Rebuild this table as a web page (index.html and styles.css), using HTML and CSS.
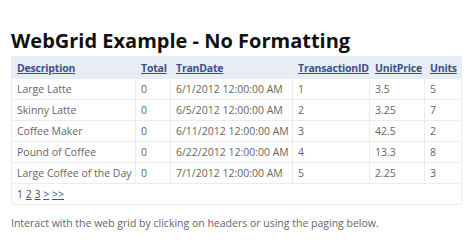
FILE: index.html
```html
<!DOCTYPE html>
<html>
<head>
<meta charset="utf-8">
<link rel="stylesheet" href="styles.css">
</head>
<body>
<div class="page">
  <h1 class="title">WebGrid Example - No Formatting</h1>
  <table class="grid">
    <colgroup>
      <col class="c-desc"><col class="c-total"><col class="c-date"><col class="c-id"><col class="c-price"><col class="c-units">
    </colgroup>
    <thead>
      <tr>
        <th><a href="#">Description</a></th>
        <th><a href="#">Total</a></th>
        <th><a href="#">TranDate</a></th>
        <th><a href="#">TransactionID</a></th>
        <th><a href="#">UnitPrice</a></th>
        <th><a href="#">Units</a></th>
      </tr>
    </thead>
    <tbody>
      <tr><td>Large Latte</td><td>0</td><td>6/1/2012 12:00:00 AM</td><td>1</td><td>3.5</td><td>5</td></tr>
      <tr><td>Skinny Latte</td><td>0</td><td>6/5/2012 12:00:00 AM</td><td>2</td><td>3.25</td><td>7</td></tr>
      <tr><td>Coffee Maker</td><td>0</td><td>6/11/2012 12:00:00 AM</td><td>3</td><td>42.5</td><td>2</td></tr>
      <tr><td>Pound of Coffee</td><td>0</td><td>6/22/2012 12:00:00 AM</td><td>4</td><td>13.3</td><td>8</td></tr>
      <tr><td>Large Coffee of the Day</td><td>0</td><td>7/1/2012 12:00:00 AM</td><td>5</td><td>2.25</td><td>3</td></tr>
    </tbody>
    <tfoot>
      <tr><td colspan="6" class="pager">1 <a href="#">2</a> <a href="#">3</a> <a href="#">&gt;</a> <a href="#">&gt;&gt;</a></td></tr>
    </tfoot>
  </table>
  <p class="note">Interact with the web grid by clicking on headers or using the paging below.</p>
</div>
</body>
</html>
```
FILE: styles.css
```css
html, body {
  margin: 0;
  padding: 0;
  background: #ffffff;
}
.page {
  padding: 29px 0 0 11px;
  font-family: "Open Sans", "DejaVu Sans", sans-serif;
  color: #666666;
}
.title {
  margin: 0 0 3px 0;
  font-size: 20px;
  line-height: 24px;
  font-weight: 700;
  color: #111111;
}
.grid {
  border-collapse: collapse;
  table-layout: fixed;
  width: 450px;
  font-size: 10.5px;
}
.grid th, .grid td {
  border: 1px solid #ececec;
  height: 20px;
  padding: 0 4px 0 5px;
  text-align: left;
  white-space: nowrap;
  overflow: hidden;
}
.grid thead th {
  background: #e8edf4;
  border-color: #e8edf4;
  height: 21px;
  padding: 0 0 0 5px;
  letter-spacing: -0.2px;
}
.grid th a {
  color: #3d4f8d;
  font-weight: 700;
}
.c-desc { width: 124px; }
.c-total { width: 35px; }
.c-date { width: 122px; }
.c-id { width: 77px; }
.c-price { width: 55px; }
.c-units { width: 37px; }
.grid td.pager {
  color: #555555;
}
.pager a {
  color: #3d4f8d;
}
.note {
  margin: 11px 0 0 0;
  font-size: 10.5px;
  color: #666666;
}
```
